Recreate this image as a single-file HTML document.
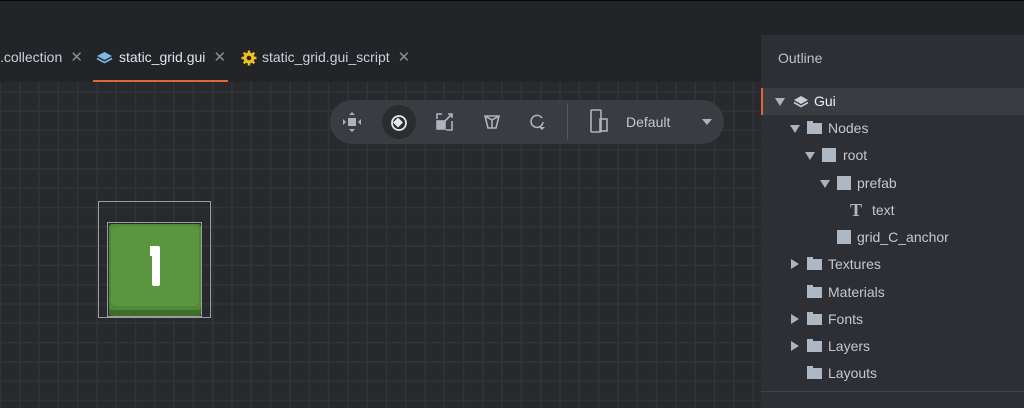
<!DOCTYPE html>
<html><head><meta charset="utf-8"><style>
*{margin:0;padding:0;box-sizing:border-box}
body{width:1024px;height:408px;overflow:hidden;background:#222428;font-family:"Liberation Sans","DejaVu Sans",sans-serif;position:relative}
.top{position:absolute;left:0;top:0;width:1024px;height:1px;background:#0a0a0a}
.canvas{position:absolute;left:0;top:82px;width:761px;height:326px;background-color:#27292d;
background-image:linear-gradient(to right,#313338 1.5px,transparent 1.5px),linear-gradient(to bottom,#313338 1.5px,transparent 1.5px);
background-size:19.3px 19.3px;background-position:-0.3px 9px}
.tab{position:absolute;top:48px;font-size:14px;color:#c8d0da;white-space:nowrap}
.x{color:#8a8f96;font-size:15px}
.pill{position:absolute;left:330px;top:100px;width:394px;height:44px;border-radius:22px;background:#3a3c41}
.panel{position:absolute;left:761px;top:35px;width:263px;height:373px;background:#2d2f34}
.row{position:absolute;left:0;width:263px;height:27px;font-size:14px;color:#c1c9d3;line-height:27px}
.tri{position:absolute;width:0;height:0}
.dn{border-left:5px solid transparent;border-right:5px solid transparent;border-top:8px solid #aab3be;top:10px}
.rt{border-top:5px solid transparent;border-bottom:5px solid transparent;border-left:8px solid #aab3be;top:8px}
.fold{position:absolute;top:8px;width:15px;height:11px;background:#aeb8c4;border-top:2px solid #aeb8c4}
.fold:before{content:"";position:absolute;left:0;top:-4px;width:6px;height:3px;background:#aeb8c4}
.sq{position:absolute;top:6px;width:14px;height:14px;background:#aeb8c4}
.lbl{position:absolute;top:0}
</style></head><body>
<div class="top"></div>
<div class="canvas"></div>
<div class="tab" style="left:0">.collection <span class="x">&nbsp;✕</span></div>
<svg style="position:absolute;left:96px;top:51px" width="17" height="13" viewBox="0 0 17 13"><path d="M8.5 1 L16 5 L8.5 9 L1 5Z" fill="#7fb8e0"/><path d="M1 7.5 L8.5 11.5 L16 7.5" stroke="#7fb8e0" stroke-width="1.6" fill="none"/></svg>
<div class="tab" style="left:119px;color:#dfe5ec">static_grid.gui <span class="x">&nbsp;✕</span></div>
<div style="position:absolute;left:93px;top:80px;width:135px;height:2px;background:#e0663a"></div>
<svg style="position:absolute;left:241px;top:50px" width="16" height="16" viewBox="0 0 16 16"><circle cx="8" cy="8" r="5.5" fill="#f0c020"/><g stroke="#f0c020" stroke-width="2.4"><path d="M8 0.5V15.5M0.5 8H15.5M2.7 2.7L13.3 13.3M13.3 2.7L2.7 13.3"/></g><circle cx="8" cy="8" r="2.3" fill="#222428"/></svg>
<div class="tab" style="left:262px">static_grid.gui_script <span class="x">&nbsp;✕</span></div>

<div class="pill"></div>
<svg style="position:absolute;left:330px;top:100px" width="394" height="44">
<g fill="#aab3be"><rect x="18" y="18" width="8" height="8"/><path d="M22 12l-3 3h6zM22 32l-3-3h6zM16 22l-3-3v6zM28 22l3-3v6z"/></g>
<circle cx="69" cy="22" r="17" fill="#2a2c30"/>
<circle cx="69" cy="23" r="7" fill="none" stroke="#e6e9ec" stroke-width="1.8"/><rect x="64.5" y="19" width="7" height="7" fill="#e6e9ec" transform="rotate(45 68 22.5)"/>
<g fill="none" stroke="#aab3be" stroke-width="1.6"><rect x="107" y="21" width="8" height="8" fill="#aab3be"/><path d="M107 19V14h5M122 21v9h-6M114 22l8-8M118 14h4v4"/>
<path d="M155 16h14l-3 12h-8zM155 16l7 4 7-4M162 20v8"/>
<path d="M213 22a6 6 0 1 1 -1 -4"/></g>
<path d="M209 27l3 3 3-3z" fill="#aab3be"/>
<rect x="237" y="4" width="1" height="36" fill="#55585e"/>
<g fill="none" stroke="#aab3be" stroke-width="1.6"><rect x="261" y="10" width="10" height="22" rx="1"/><rect x="270" y="19" width="7" height="12"/></g>
<text x="296" y="27" font-size="14" fill="#c1c9d3" font-family="Liberation Sans">Default</text>
<path d="M372 19h10l-5 6z" fill="#aab3be"/>
</svg>

<div style="position:absolute;left:98px;top:201px;width:113px;height:117px;border:1px solid #9a9ea3"></div>
<div style="position:absolute;left:107px;top:222px;width:95px;height:95px;border:1px solid #9a9ea3"></div>
<div style="position:absolute;left:109px;top:224px;width:92px;height:92px;background:#4f8a35;border-radius:3px;box-shadow:inset 0 -6px 0 #3f6e2a"></div>
<div style="position:absolute;left:111px;top:226px;width:88px;height:80px;background:#5c953f;border-radius:5px"></div>
<div style="position:absolute;left:152px;top:246px;width:8px;height:40px;background:#fff;border-radius:2px"></div>
<div style="position:absolute;left:150px;top:246px;width:6px;height:10px;background:#fff"></div>

<div class="panel">
<div style="position:absolute;left:17px;top:15px;font-size:14px;color:#b8c2cd">Outline</div>
<div class="row" style="top:53px;background:#393c41;border-left:2px solid #e0663a;color:#eef1f4">
<div class="tri dn" style="left:12px"></div>
<svg style="position:absolute;left:30px;top:7px" width="16" height="13" viewBox="0 0 16 13"><path d="M8 1L15 5L8 9L1 5Z" fill="#c9d0d8"/><path d="M1 7.5L8 11.5L15 7.5" stroke="#c9d0d8" stroke-width="1.6" fill="none"/></svg>
<div class="lbl" style="left:51px">Gui</div></div>
<div class="row" style="top:80px"><div class="tri dn" style="left:29px"></div><div class="fold" style="left:46px"></div><div class="lbl" style="left:67px">Nodes</div></div>
<div class="row" style="top:107px"><div class="tri dn" style="left:44px"></div><div class="sq" style="left:61px"></div><div class="lbl" style="left:82px">root</div></div>
<div class="row" style="top:134.5px"><div class="tri dn" style="left:59px"></div><div class="sq" style="left:76px"></div><div class="lbl" style="left:96px">prefab</div></div>
<div class="row" style="top:162px"><div class="lbl" style="left:89px;font-family:'Liberation Serif',serif;font-weight:bold;font-size:18px;color:#aeb8c4">T</div><div class="lbl" style="left:111px">text</div></div>
<div class="row" style="top:189px"><div class="sq" style="left:76px"></div><div class="lbl" style="left:96px">grid_C_anchor</div></div>
<div class="row" style="top:216px"><div class="tri rt" style="left:30px"></div><div class="fold" style="left:46px"></div><div class="lbl" style="left:67px">Textures</div></div>
<div class="row" style="top:243.5px"><div class="fold" style="left:46px"></div><div class="lbl" style="left:67px">Materials</div></div>
<div class="row" style="top:271px"><div class="tri rt" style="left:30px"></div><div class="fold" style="left:46px"></div><div class="lbl" style="left:67px">Fonts</div></div>
<div class="row" style="top:298px"><div class="tri rt" style="left:30px"></div><div class="fold" style="left:46px"></div><div class="lbl" style="left:67px">Layers</div></div>
<div class="row" style="top:325px"><div class="fold" style="left:46px"></div><div class="lbl" style="left:67px">Layouts</div></div>
<div style="position:absolute;left:0;top:356px;width:263px;height:1px;background:#3e4146"></div>
</div>
</body></html>
